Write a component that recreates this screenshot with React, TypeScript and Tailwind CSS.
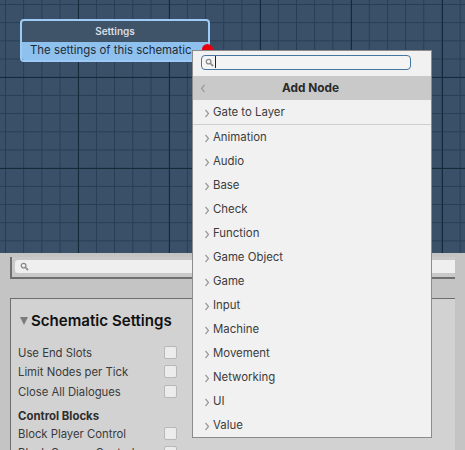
const menuItems = ["Animation", "Audio", "Base", "Check", "Function", "Game Object", "Game", "Input", "Machine", "Movement", "Networking", "UI", "Value"];
const settingRows = ["Use End Slots", "Limit Nodes per Tick", "Close All Dialogues"];

function SearchGlyph() {
    return (
        <svg width="9" height="9" viewBox="0 0 10 10" fill="none" className="shrink-0">
            <circle cx="4" cy="4" r="2.6" stroke="#8a8a8a" strokeWidth="1.4" />
            <path d="M6 6 L9 9" stroke="#8a8a8a" strokeWidth="1.8" />
        </svg>
    );
}

function Chevron({ left = false }: { left?: boolean }) {
    return (
        <svg width="6" height="9" viewBox="0 0 6 9" fill="none" className="shrink-0">
            <path d={left ? "M4.5 1 L1.5 4.5 L4.5 8" : "M1.5 1 L4.5 4.5 L1.5 8"} stroke="#9a9a9a" strokeWidth="1.2" />
        </svg>
    );
}

function MenuRow({ label, className = "" }: { label: string; className?: string }) {
    return (
        <div className={`flex h-6 shrink-0 items-center gap-[3px] pl-[11px] pt-[2px] text-[11.4px] text-[#3c3c3c] ${className}`}>
            <Chevron />
            <span>{label}</span>
        </div>
    );
}

function CheckRow({ label }: { label: string }) {
    return (
        <div className="flex h-[19.3px] w-[159px] items-center justify-between text-[11.3px] text-[#3a3a3a]">
            <span>{label}</span>
            <div className="mb-[2px] h-[13px] w-[13px] rounded-[2px] border border-[#b8b8b8] bg-[#ececec]" />
        </div>
    );
}

export default function App() {
    return (
        <div className="relative flex h-[450px] w-[465px] flex-col overflow-hidden bg-[#c4c4c4] font-['Inter',sans-serif]">
            <div className="relative h-[253px] shrink-0 bg-[#3a5069] bg-[linear-gradient(to_right,#16293a_1px,transparent_1px),linear-gradient(to_bottom,#16293a_1px,transparent_1px),linear-gradient(to_right,#283d52_1px,transparent_1px),linear-gradient(to_bottom,#283d52_1px,transparent_1px)] bg-[size:91px_91px,91px_91px,18.2px_18.2px,18.2px_18.2px] bg-[position:78px_0,0_77px,5px_0,0_4px]">
                <div className="absolute left-[20px] top-[19px] h-[43px] w-[190px] overflow-hidden rounded-[4px] border-2 border-[#9ecbf5] bg-[#3f5469]">
                    <div className="flex h-[21px] items-center justify-center text-[10px] font-semibold text-[#d8dee4]">Settings</div>
                    <div className="flex h-[18px] items-center bg-[#8fc1ef] pl-[8px] text-[11.4px] text-[#1d2a36]">The settings of this schematic</div>
                </div>
                <div className="absolute left-[202px] top-[44px] h-[11px] w-[11px] rounded-full bg-[#e8000b]" />
            </div>

            <div className="mx-[10px] mt-[4px] h-[22px] shrink-0 border-b-2 border-l-2 border-[#6f6f6f] bg-[#c9c9c9] p-[3px] pr-0">
                <div className="flex h-[13px] items-center rounded-l-[3px] bg-[#efefef] pl-[5px]">
                    <SearchGlyph />
                </div>
            </div>

            <div className="mx-[10px] mt-[19px] flex-1 border-l border-t border-[#6e6e6e] bg-[#d2d2d2] pl-[7px] pt-[10px]">
                <div className="flex items-center gap-[3px] pl-[2px]">
                    <div className="h-0 w-0 border-x-[4px] border-t-[8px] border-x-transparent border-t-[#7b7b7b]" />
                    <h2 className="text-[15.1px] leading-6 font-semibold text-[#111]">Schematic Settings</h2>
                </div>
                <div className="mt-[11px]">
                    {settingRows.map((label) => (
                        <CheckRow key={label} label={label} />
                    ))}
                </div>
                <div className="mt-[7px] flex h-[16px] items-center text-[11.4px] font-bold text-[#2e2e2e]">Control Blocks</div>
                <CheckRow label="Block Player Control" />
                <CheckRow label="Block Camera Control" />
            </div>

            <div className="absolute left-[192px] top-[50px] flex h-[388px] w-[240px] flex-col overflow-hidden border border-[#8b8b8b] bg-[#f1f1f1]">
                <div className="flex h-[25px] shrink-0 items-center pb-[3px] pl-[8px] pr-[20px]">
                    <div className="flex h-[15px] w-full items-center gap-[1px] rounded-[4px] border border-[#46759f] bg-[#f4f4f4] pl-[3px]">
                        <SearchGlyph />
                        <div className="h-[12px] w-px bg-[#222]" />
                    </div>
                </div>
                <div className="relative flex h-[24px] shrink-0 items-center justify-center bg-[#c9c9c9] pr-[3px] pt-[1px] text-[11.8px] font-bold text-[#2a2a2a]">
                    <div className="absolute left-[7px] flex items-center">
                        <Chevron left />
                    </div>
                    Add Node
                </div>
                <MenuRow label="Gate to Layer" className="h-[25px] border-b border-[#cfcfcf]" />
                {menuItems.map((label) => (
                    <MenuRow key={label} label={label} />
                ))}
            </div>
        </div>
    );
}
